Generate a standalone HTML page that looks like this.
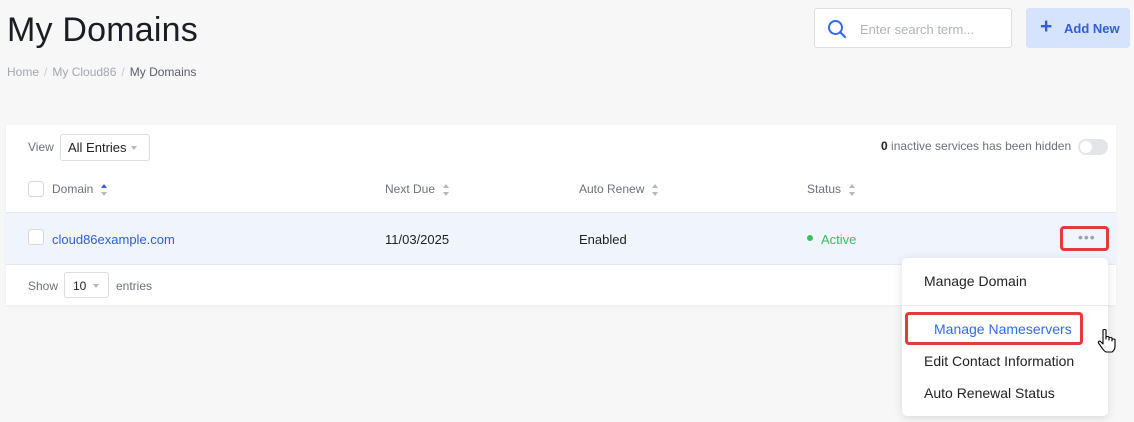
<!DOCTYPE html>
<html><head><meta charset="utf-8"><style>
*{box-sizing:border-box;margin:0;padding:0}
body{width:1134px;height:422px;background:#f7f7f7;font-family:"Liberation Sans",sans-serif;position:relative;overflow:hidden;color:#222}
.a{position:absolute}
h1{position:absolute;left:7px;top:11px;font-size:34px;font-weight:400;color:#1a1d24;letter-spacing:0.2px}
.bc{left:7px;top:65px;font-size:12px;color:#a3a7b0}
.bc b{font-weight:400;color:#5b606b}
.bc i{font-style:normal;margin:0 5px;color:#c8cacf}
.search{left:814px;top:8px;width:198px;height:40px;background:#fff;border:1px solid #ddd;border-radius:3px}
.search span{position:absolute;left:45px;top:13px;font-size:13px;color:#b0b3ba}
.add{left:1026px;top:8px;width:104px;height:40px;background:#d5e3fd;border-radius:3px;color:#2e5fd9;font-size:13px;font-weight:bold}
.card{left:6px;top:125px;width:1110px;height:180px;background:#fff;box-shadow:0 1px 3px rgba(0,0,0,.05)}
.sel{position:absolute;background:#fff;border:1px solid #ddd;border-radius:3px;font-size:13px;color:#222}
.sm{font-size:12px;color:#6c717c}
.th{font-size:12px;color:#6c717c;top:182px}
.cb{width:16px;height:16px;border:1px solid #d5d7db;border-radius:3px;background:#fff}
.sort{display:inline-block;vertical-align:middle;margin-left:8px;width:7px;height:12px;position:relative}
.sort:before{content:"";position:absolute;top:0;border-left:3.5px solid transparent;border-right:3.5px solid transparent;border-bottom:4px solid #b5b8bf}
.sort:after{content:"";position:absolute;bottom:0;border-left:3.5px solid transparent;border-right:3.5px solid transparent;border-top:4px solid #b5b8bf}
.sort.up:before{border-bottom-color:#2e5fd9}
.row{left:6px;top:212px;width:1110px;height:53px;background:#eff4fd;border-top:1px solid #e6e8ec;border-bottom:1px solid #e6e8ec}
.td{top:232px;font-size:13px;color:#222}
.menu{left:902px;top:258px;width:206px;height:158px;background:#fff;border-radius:5px;box-shadow:0 2px 10px rgba(0,0,0,.12)}
.mi{position:absolute;left:22px;font-size:14px;color:#222}
.red{position:absolute;border:3px solid #e43a3a;border-radius:4px}
</style></head><body>
<h1>My Domains</h1>
<div class="a bc">Home<i>/</i>My Cloud86<i>/</i><b>My Domains</b></div>
<div class="a search"><svg class="a" style="left:12px;top:10px" width="20" height="20" viewBox="0 0 20 20"><circle cx="8.5" cy="8.5" r="6.5" fill="none" stroke="#2e6bf0" stroke-width="2"/><line x1="13.5" y1="13.5" x2="18" y2="18" stroke="#2e6bf0" stroke-width="2.2" stroke-linecap="round"/></svg><span>Enter search term...</span></div>
<div class="a add"><span class="a" style="left:14px;top:7px;font-size:21px">+</span><span class="a" style="left:38px;top:13px">Add New</span></div>
<div class="a card"></div>
<div class="a sm" style="left:28px;top:140px">View</div>
<div class="sel" style="left:60px;top:134px;width:90px;height:27px"><span class="a" style="left:7px;top:5px">All Entries</span><span class="a" style="left:70px;top:11px;border-left:3.5px solid transparent;border-right:3.5px solid transparent;border-top:4px solid #b5b8bf"></span></div>
<div class="a sm" style="left:881px;top:139px"><b style="color:#222">0</b> inactive services has been hidden</div>
<div class="a" style="left:1078px;top:139px;width:30px;height:16px;border-radius:8px;background:#e4e5e8"><div class="a" style="left:2px;top:2px;width:12px;height:12px;border-radius:6px;background:#fff"></div></div>
<div class="a cb" style="left:28px;top:181px"></div>
<div class="a th" style="left:52px">Domain<span class="sort up"></span></div>
<div class="a th" style="left:385px">Next Due<span class="sort"></span></div>
<div class="a th" style="left:579px">Auto Renew<span class="sort"></span></div>
<div class="a th" style="left:807px">Status<span class="sort"></span></div>
<div class="a row"></div>
<div class="a cb" style="left:28px;top:229px"></div>
<div class="a td" style="left:52px;color:#2e5fd9">cloud86example.com</div>
<div class="a td" style="left:385px">11/03/2025</div>
<div class="a td" style="left:579px">Enabled</div>
<div class="a" style="left:807px;top:235px;width:6px;height:6px;border-radius:3px;background:#3bbf5c"></div>
<div class="a td" style="left:821px;color:#3bbf5c">Active</div>
<div class="red" style="left:1060px;top:226px;width:49px;height:25px"></div>
<div class="a" style="left:1078px;top:233px;font-size:14px;color:#9ea2aa;letter-spacing:1px;line-height:8px">&bull;&bull;&bull;</div>
<div class="a sm" style="left:28px;top:279px">Show</div>
<div class="sel" style="left:64px;top:272px;width:45px;height:26px"><span class="a" style="left:8px;top:6px;font-size:12px">10</span><span class="a" style="left:28px;top:11px;border-left:3px solid transparent;border-right:3px solid transparent;border-top:4px solid #b5b8bf"></span></div>
<div class="a sm" style="left:116px;top:279px">entries</div>
<div class="a menu">
<div class="mi" style="top:15px">Manage Domain</div>
<div class="a" style="left:0;top:47px;width:206px;height:1px;background:#e6e8ec"></div>
<div class="mi" style="top:63px;left:32px;color:#2e6bf0">Manage Nameservers</div>
<div class="mi" style="top:95px">Edit Contact Information</div>
<div class="mi" style="top:127px">Auto Renewal Status</div>
</div>
<div class="red" style="left:905px;top:312px;width:178px;height:33px"></div>
<svg class="a" style="left:1097px;top:328px" width="20" height="26" viewBox="0 0 20 26"><path d="M6 2 Q7.5 1 9 2 V11 V9 Q10.5 8 12 9 V12 V10 Q13.5 9 15 10 V13 V11.5 Q16.5 10.5 18 11.5 V18 Q18 22 15 24 H9 Q7 23 5 20 L1.5 15 Q1 13 3 13 L6 16 Z" fill="#fff" stroke="#000" stroke-width="1.1" stroke-linejoin="round"/></svg>
</body></html>
